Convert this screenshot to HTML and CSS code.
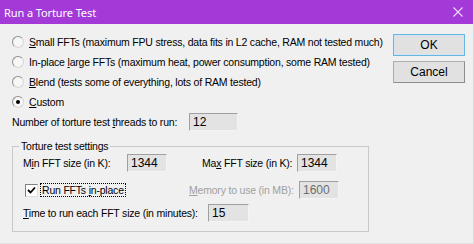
FILE: index.html
```html
<!DOCTYPE html>
<html lang="en">
<head>
    <meta charset="UTF-8">
    <title>Run a Torture Test</title>
    <link rel="stylesheet" href="styles.css">
</head>
<body>

    <div class="window">
        <div class="titlebar">
            <span class="title">Run a Torture Test</span>
            <svg class="close" width="10" height="10" viewBox="0 0 10 10">
                <path d="M0.5 0.5 L9.5 9.5 M9.5 0.5 L0.5 9.5" stroke="#f3dcff" stroke-width="1.1" fill="none"/>
            </svg>
        </div>

        <div class="content">
            <div class="left-col">
                <div class="radio-row"><span class="radio"></span><span><u>S</u>mall FFTs (maximum FPU stress, data fits in L2 cache, RAM not tested much)</span></div>
                <div class="radio-row"><span class="radio"></span><span>In-place <u>l</u>arge FFTs (maximum heat, power consumption, some RAM tested)</span></div>
                <div class="radio-row"><span class="radio"></span><span><u>B</u>lend (tests some of everything, lots of RAM tested)</span></div>
                <div class="radio-row"><span class="radio checked"></span><span><u>C</u>ustom</span></div>

                <div class="field-row threads-row">
                    <span class="lbl lbl-threads">Number of torture test <u>t</u>hreads to run:</span>
                    <span class="box box-threads">12</span>
                </div>

                <fieldset class="group">
                    <legend>Torture test settings</legend>

                    <div class="field-row min-row">
                        <span class="lbl lbl-min">M<u>i</u>n FFT size (in K):</span>
                        <span class="box">1344</span>
                        <span class="lbl lbl-max">Ma<u>x</u> FFT size (in K):</span>
                        <span class="box">1344</span>
                    </div>

                    <div class="field-row check-row">
                        <span class="checkbox">
                            <svg width="9" height="9" viewBox="0 0 9 9">
                                <path d="M1 4 L3.5 6.5 L8 1.5" stroke="#000" stroke-width="1.8" fill="none"/>
                            </svg>
                        </span>
                        <span class="focus-label">Run FFTs <u>i</u>n-place</span>
                        <span class="lbl lbl-mem disabled"><u>M</u>emory to use (in MB):</span>
                        <span class="box disabled-box">1600</span>
                    </div>

                    <div class="field-row time-row">
                        <span class="lbl lbl-time"><u>T</u>ime to run each FFT size (in minutes):</span>
                        <span class="box box-time">15</span>
                    </div>
                </fieldset>
            </div>

            <div class="buttons">
                <button class="btn btn-ok">OK</button>
                <button class="btn">Cancel</button>
            </div>
        </div>
    </div>

</body>
</html>
```

FILE: styles.css
```css
* {
    box-sizing: border-box;
    margin: 0;
    padding: 0;
}

body {
    width: 474px;
    height: 244px;
    background-color: #f0f0f0;
    font-family: "Liberation Sans", Arial, sans-serif;
    font-size: 10.5px;
    letter-spacing: -0.2px;
    color: #000;
    overflow: hidden;
}

.window {
    height: 244px;
    border-right: 1px solid #d9d9d9;
    border-bottom: 1px solid #e2e2e2;
}

.titlebar {
    height: 24px;
    background-color: #a33ad8;
    display: flex;
    align-items: center;
    justify-content: space-between;
    padding: 0 10px 0 4px;
}

.title {
    color: #fff;
    font-family: "Noto Sans", "Open Sans", sans-serif;
    font-size: 11px;
    letter-spacing: -0.1px;
}

.content {
    display: flex;
    padding: 8px 8px 0 12px;
}

.left-col {
    width: 357px;
    flex-shrink: 0;
}

.radio-row {
    height: 20px;
    display: flex;
    align-items: center;
    white-space: nowrap;
}

.radio {
    flex-shrink: 0;
    width: 12px;
    height: 12px;
    border-radius: 50%;
    border: 1px solid;
    border-color: #8f8f8f #d6d6d6 #d6d6d6 #8f8f8f;
    background-color: #f7f7f7;
    margin: 0 5px 0 0;
    display: flex;
    align-items: center;
    justify-content: center;
}

.radio.checked::after {
    content: "";
    width: 4px;
    height: 4px;
    border-radius: 50%;
    background-color: #000;
}

.field-row {
    display: flex;
    align-items: center;
    white-space: nowrap;
}

.lbl {
    flex-shrink: 0;
}

.threads-row {
    height: 20px;
}

.lbl-threads {
    width: 177px;
}

.box {
    flex-shrink: 0;
    width: 40px;
    height: 18px;
    line-height: 16px;
    padding-left: 3px;
    background-color: #e3e3e3;
    border: 1px solid;
    border-color: #a0a0a0 #f4f4f4 #f4f4f4 #a0a0a0;
    font-size: 12px;
    letter-spacing: 0;
}

.box-threads {
    width: 49px;
}

.box-time {
    width: 41px;
}

.group {
    margin-top: 8px;
    width: 100%;
    height: 92px;
    border: 1px solid #c9c9c9;
    padding: 2px 0 0 10px;
}

.group legend {
    padding: 0 2px;
    margin-left: -4px;
}

.min-row {
    height: 18px;
}

.lbl-min {
    width: 104px;
}

.lbl-max {
    width: 95px;
    margin-left: 35px;
}

.check-row {
    height: 18px;
    margin-top: 9px;
}

.checkbox {
    flex-shrink: 0;
    width: 13px;
    height: 13px;
    border: 1px solid;
    border-color: #808080 #e0e0e0 #e0e0e0 #808080;
    background-color: #fff;
    margin-left: 2px;
    display: flex;
    align-items: center;
    justify-content: center;
}

.focus-label {
    flex-shrink: 0;
    border: 1px dotted #000;
    padding: 0 1px;
    margin-left: 2px;
    width: 86px;
}

.lbl-mem {
    width: 110px;
    margin-left: 63px;
}

.disabled {
    color: #a0a0a0;
}

.disabled-box {
    color: #6d6d6d;
}

.time-row {
    height: 18px;
    margin-top: 5px;
}

.lbl-time {
    width: 185px;
}

.buttons {
    margin-left: auto;
    margin-top: 2px;
    display: flex;
    flex-direction: column;
    gap: 5px;
}

.btn {
    width: 72px;
    height: 22px;
    font-family: "Liberation Sans", Arial, sans-serif;
    font-size: 12px;
    background-color: #e1e1e1;
    border: 1px solid #adadad;
    border-right-color: #8d8d8d;
    border-bottom-color: #8d8d8d;
    color: #000;
}

.btn-ok {
    border: 1px solid #67b5e0;
    box-shadow: inset 0 0 0 1px #cfe6f4;
}
```
